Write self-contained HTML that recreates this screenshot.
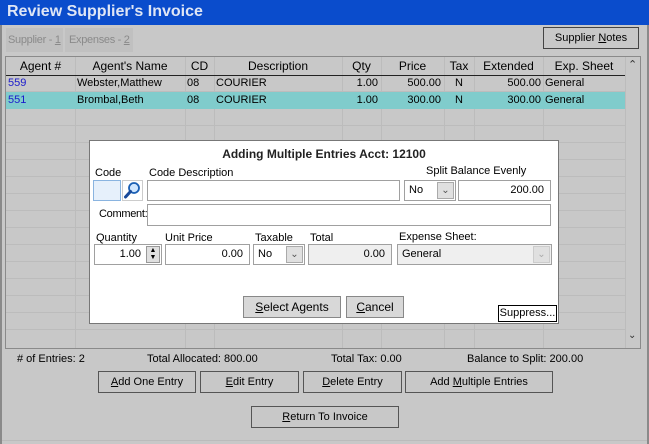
<!DOCTYPE html>
<html><head><style>
*{box-sizing:border-box;margin:0;padding:0}
body{width:649px;height:444px;overflow:hidden;background:#c8c8c8;font-family:"Liberation Sans",sans-serif;font-size:11px;color:#000;position:relative}
.a{position:absolute;white-space:nowrap}
.title{left:0;top:0;width:649px;height:25px;background:#0a4ccc;color:#dfe6f5;font-weight:bold;font-size:16px;padding:3px 0 0 7px}
.btn{position:absolute;border:1px solid #555;background:#c8c8c8;text-align:center;font-size:11px;white-space:nowrap}
.vl{position:absolute;width:1px;background:#bcbcbc}
.hl{position:absolute;height:1px;background:#bcbcbc;left:6px;width:619px}
.cell{position:absolute;height:17px;line-height:17px;font-size:11px;white-space:nowrap}
.in{position:absolute;background:#fff;border:1px solid #a0a0a0;font-size:11px;line-height:19px;padding:0 6px;text-align:right;white-space:nowrap}
.lbl{position:absolute;font-size:11px;white-space:nowrap}
.tab{position:absolute;height:24px;background:#c0c0c0;color:#8a8a8a;font-size:11px;line-height:24px;white-space:nowrap;top:28px;letter-spacing:-0.3px}
</style></head><body>
<div class="a" style="left:0;top:0;width:2px;height:444px;background:#8a8a8a"></div>
<div class="a" style="right:0;top:0;width:2px;height:444px;background:#8a8a8a"></div>
<div class="a title">Review Supplier's Invoice</div>
<div class="tab" style="left:6px;width:57px;padding-left:2px">Supplier - <u>1</u></div>
<div class="tab" style="left:65px;width:68px;padding-left:4px">Expenses - <u>2</u></div>
<div class="btn" style="left:543px;top:27px;width:96px;height:22px;line-height:20px;border-color:#444">Supplier <u>N</u>otes</div>
<!-- grid -->
<div class="a" style="left:5px;top:56px;width:636px;height:293px;border:1px solid #8a8a8a;background:#c8c8c8"></div>
<div class="a" style="left:625px;top:57px;width:15px;height:291px;background:#c8c8c8;border-left:1px solid #bcbcbc"></div>
<div class="a" style="left:628px;top:58px;font-size:11px;color:#333">&#8963;</div>
<div class="a" style="left:628px;top:330px;font-size:10px;color:#333">&#8964;</div>
<div class="vl" style="left:75px;top:57px;height:291px"></div>
<div class="vl" style="left:185px;top:57px;height:291px"></div>
<div class="vl" style="left:214px;top:57px;height:291px"></div>
<div class="vl" style="left:342px;top:57px;height:291px"></div>
<div class="vl" style="left:381px;top:57px;height:291px"></div>
<div class="vl" style="left:444px;top:57px;height:291px"></div>
<div class="vl" style="left:474px;top:57px;height:291px"></div>
<div class="vl" style="left:543px;top:57px;height:291px"></div>
<div class="a" style="left:6px;top:75px;width:619px;height:1px;background:#222"></div>
<div class="hl" style="top:91px"></div>
<div class="a" style="left:6px;top:92px;width:619px;height:17px;background:#80cccc"></div>
<div class="hl" style="top:125px"></div><div class="hl" style="top:142px"></div><div class="hl" style="top:159px"></div><div class="hl" style="top:176px"></div><div class="hl" style="top:193px"></div><div class="hl" style="top:210px"></div><div class="hl" style="top:227px"></div><div class="hl" style="top:244px"></div><div class="hl" style="top:261px"></div><div class="hl" style="top:278px"></div><div class="hl" style="top:295px"></div><div class="hl" style="top:312px"></div><div class="hl" style="top:329px"></div>
<div class="cell" style="top:58px;left:6px;width:69px;text-align:center;font-size:12px">Agent #</div>
<div class="cell" style="top:58px;left:75px;width:110px;text-align:center;font-size:12px">Agent's Name</div>
<div class="cell" style="top:58px;left:185px;width:29px;text-align:center;font-size:12px">CD</div>
<div class="cell" style="top:58px;left:214px;width:128px;text-align:center;font-size:12px">Description</div>
<div class="cell" style="top:58px;left:342px;width:39px;text-align:center;font-size:12px">Qty</div>
<div class="cell" style="top:58px;left:381px;width:63px;text-align:center;font-size:12px">Price</div>
<div class="cell" style="top:58px;left:444px;width:30px;text-align:center;font-size:12px">Tax</div>
<div class="cell" style="top:58px;left:474px;width:69px;text-align:center;font-size:12px">Extended</div>
<div class="cell" style="top:58px;left:543px;width:82px;text-align:center;font-size:12px">Exp. Sheet</div>
<div class="cell" style="top:75px;left:8px;color:#1a1acc">559</div>
<div class="cell" style="top:75px;left:77px">Webster,Matthew</div>
<div class="cell" style="top:75px;left:187px">08</div>
<div class="cell" style="top:75px;left:216px">COURIER</div>
<div class="cell" style="top:75px;left:342px;width:36px;text-align:right">1.00</div>
<div class="cell" style="top:75px;left:381px;width:60px;text-align:right">500.00</div>
<div class="cell" style="top:75px;left:444px;width:30px;text-align:center">N</div>
<div class="cell" style="top:75px;left:474px;width:67px;text-align:right">500.00</div>
<div class="cell" style="top:75px;left:545px">General</div>
<div class="cell" style="top:92px;left:8px;color:#1a1acc">551</div>
<div class="cell" style="top:92px;left:77px">Brombal,Beth</div>
<div class="cell" style="top:92px;left:187px">08</div>
<div class="cell" style="top:92px;left:216px">COURIER</div>
<div class="cell" style="top:92px;left:342px;width:36px;text-align:right">1.00</div>
<div class="cell" style="top:92px;left:381px;width:60px;text-align:right">300.00</div>
<div class="cell" style="top:92px;left:444px;width:30px;text-align:center">N</div>
<div class="cell" style="top:92px;left:474px;width:67px;text-align:right">300.00</div>
<div class="cell" style="top:92px;left:545px">General</div>
<!-- dialog -->
<div class="a" style="left:89px;top:140px;width:470px;height:184px;background:#fff;border:1px solid #777"></div>
<div class="lbl" style="left:89px;top:147px;width:470px;text-align:center;font-weight:bold;font-size:12px;color:#222">Adding Multiple Entries Acct: 12100</div>
<div class="lbl" style="left:95px;top:167px">Code</div>
<div class="lbl" style="left:149px;top:167px">Code Description</div>
<div class="lbl" style="left:426px;top:165px">Split Balance Evenly</div>
<div class="a" style="left:93px;top:180px;width:28px;height:21px;background:#e6f0fb;border:1px solid #8ab4e0"></div>
<div class="a" style="left:122px;top:180px;width:21px;height:21px;background:#fff;border:1px solid #ccc">
<svg width="19" height="19" viewBox="0 0 19 19"><circle cx="11" cy="7" r="5" fill="#cfe6ff" stroke="#1a5fb4" stroke-width="1.8"/><path d="M7.5 10.5 L2.5 16" stroke="#1a4a9a" stroke-width="3" stroke-linecap="round"/></svg></div>
<div class="in" style="left:147px;top:180px;width:253px;height:21px"></div>
<div class="in" style="left:404px;top:180px;width:52px;height:21px;text-align:left;padding-left:4px">No</div>
<div class="a" style="left:437px;top:182px;width:17px;height:17px;background:#e0e0e0;border:1px solid #aaa;font-size:10px;text-align:center;line-height:15px;color:#555">&#8964;</div>
<div class="in" style="left:458px;top:180px;width:93px;height:21px">200.00</div>
<div class="lbl" style="left:99px;top:208px;letter-spacing:-0.3px">Comment:</div>
<div class="in" style="left:147px;top:204px;width:404px;height:22px"></div>
<div class="lbl" style="left:96px;top:232px">Quantity</div>
<div class="lbl" style="left:165px;top:232px">Unit Price</div>
<div class="lbl" style="left:255px;top:232px">Taxable</div>
<div class="lbl" style="left:310px;top:232px">Total</div>
<div class="lbl" style="left:399px;top:231px">Expense Sheet:</div>
<div class="in" style="left:94px;top:244px;width:68px;height:21px;padding-right:20px">1.00</div>
<div class="a" style="left:146px;top:246px;width:14px;height:17px;background:#e0e0e0;border:1px solid #999;font-size:7px;line-height:7px;text-align:center">&#9650;<br>&#9660;</div>
<div class="in" style="left:165px;top:244px;width:85px;height:21px">0.00</div>
<div class="in" style="left:253px;top:244px;width:52px;height:21px;text-align:left;padding-left:4px">No</div>
<div class="a" style="left:286px;top:246px;width:17px;height:17px;background:#e0e0e0;border:1px solid #aaa;font-size:10px;text-align:center;line-height:15px;color:#555">&#8964;</div>
<div class="in" style="left:308px;top:244px;width:84px;height:21px;background:#efefef">0.00</div>
<div class="in" style="left:397px;top:244px;width:155px;height:21px;background:#efefef;text-align:left;padding-left:4px">General</div>
<div class="a" style="left:533px;top:246px;width:17px;height:17px;background:#e0e0e0;border:1px solid #ccc;font-size:10px;text-align:center;line-height:15px;color:#aaa">&#8964;</div>
<div class="btn" style="left:243px;top:296px;width:98px;height:22px;line-height:20px;background:#d8d8d8;border-color:#888;font-size:12px"><u>S</u>elect Agents</div>
<div class="btn" style="left:346px;top:296px;width:58px;height:22px;line-height:20px;background:#d8d8d8;border-color:#888;font-size:12px"><u>C</u>ancel</div>
<div class="btn" style="left:498px;top:305px;width:59px;height:17px;line-height:15px;background:#fff;border-color:#000;font-size:11px">Suppress...</div>
<!-- footer -->
<div class="lbl" style="left:17px;top:353px">#&nbsp;of Entries: 2</div>
<div class="lbl" style="left:147px;top:353px">Total Allocated: 800.00</div>
<div class="lbl" style="left:331px;top:353px">Total Tax: 0.00</div>
<div class="lbl" style="left:467px;top:353px">Balance to Split: 200.00</div>
<div class="btn" style="left:98px;top:371px;width:98px;height:22px;line-height:20px"><u>A</u>dd One Entry</div>
<div class="btn" style="left:200px;top:371px;width:99px;height:22px;line-height:20px"><u>E</u>dit Entry</div>
<div class="btn" style="left:303px;top:371px;width:99px;height:22px;line-height:20px"><u>D</u>elete Entry</div>
<div class="btn" style="left:405px;top:371px;width:148px;height:22px;line-height:20px">Add <u>M</u>ultiple Entries</div>
<div class="btn" style="left:251px;top:406px;width:148px;height:22px;line-height:20px"><u>R</u>eturn To Invoice</div>
<div class="a" style="left:2px;top:440px;width:645px;height:1px;background:#bbb"></div>
</body></html>
